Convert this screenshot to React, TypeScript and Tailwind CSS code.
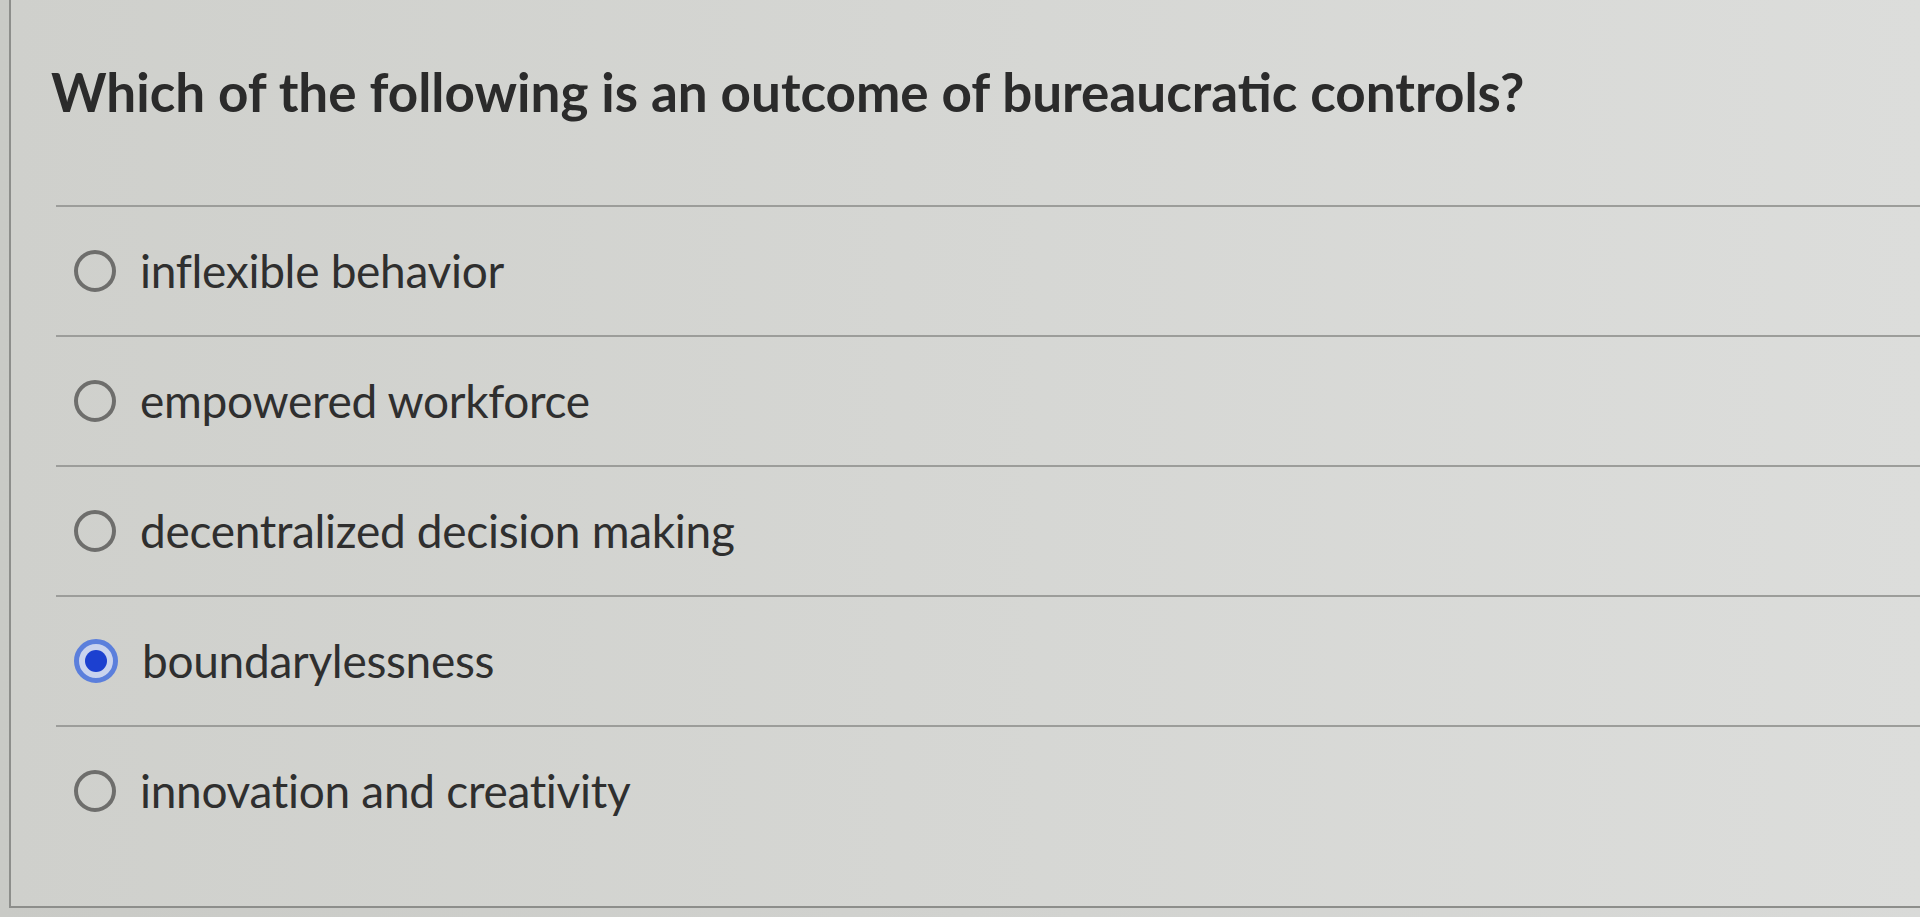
import { useState } from "react";

const options = [
  "inflexible behavior",
  "empowered workforce",
  "decentralized decision making",
  "boundarylessness",
  "innovation and creativity",
];

function Radio({ checked }: { checked: boolean }) {
  if (checked) {
    return (
      <span className="flex h-[44px] w-[44px] shrink-0 items-center justify-center rounded-full border-[5px] border-[#5b7fdc] bg-[#c9d3ee]">
        <span className="h-[22px] w-[22px] rounded-full bg-[#1c40d0]" />
      </span>
    );
  }
  return <span className="h-[42px] w-[42px] shrink-0 rounded-full border-[4px] border-[#6e6e6c]" />;
}

export default function App() {
  const [selected, setSelected] = useState(3);

  return (
    <div className="h-[917px] w-full overflow-hidden bg-linear-to-r from-[#c9cac6] to-[#d9dad8] pl-[9px] font-['Lato',sans-serif]">
      <div className="flex h-[908px] flex-col border-b-2 border-l-2 border-[#8d8e8b] bg-linear-to-r from-[#cfd0cc] to-[#dcdddb]">
        {/* Question */}
        <div className="flex h-[205px] items-start pl-[40px] pt-[57px]">
          <h1 className="text-[53px] font-bold leading-[70px] text-[#2b2b2b]">
            Which of the following is an outcome of bureaucratic controls?
          </h1>
        </div>

        {/* Answers */}
        <div className="ml-[45px] flex flex-col">
          {options.map((opt, i) => (
            <label
              key={opt}
              onClick={() => setSelected(i)}
              className="flex h-[130px] cursor-pointer items-center gap-[24px] border-t-2 border-[#9c9d9a] pl-[18px]"
            >
              <Radio checked={selected === i} />
              <span className="text-[46px] leading-none tracking-[-0.3px] text-[#2f2f2f]">{opt}</span>
            </label>
          ))}
        </div>
      </div>
    </div>
  );
}
